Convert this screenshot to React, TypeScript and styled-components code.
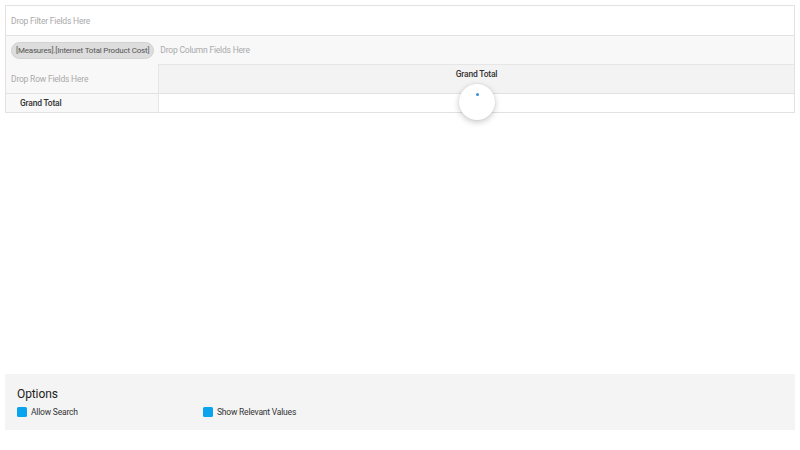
import React from 'react';
import styled, { createGlobalStyle } from 'styled-components';

const GlobalStyle = createGlobalStyle`
  html, body {
    margin: 0;
    padding: 0;
    background: #ffffff;
    font-family: Roboto, "Liberation Sans", Arial, sans-serif;
  }
`;

const Page = styled.div`
  padding: 5px;
  width: 790px;
`;

const PivotGrid = styled.div`
  position: relative;
  border: 1px solid #e2e2e2;
  background: #ffffff;
`;

const FilterArea = styled.div`
  height: 29px;
  display: flex;
  align-items: center;
  padding-left: 5px;
  border-bottom: 1px solid #e2e2e2;
`;

const Placeholder = styled.span`
  font-size: 8.5px;
  letter-spacing: -0.2px;
  color: #aaaaaa;
`;

const ColumnArea = styled.div`
  height: 28px;
  display: flex;
  align-items: center;
  gap: 6px;
  padding-left: 5px;
  background: #f8f8f8;
`;

const Chip = styled.span`
  display: inline-flex;
  align-items: center;
  height: 17px;
  padding: 0 4px;
  border-radius: 9px;
  background: #dddddd;
  border: 1px solid #d2d2d2;
  box-sizing: border-box;
  font-size: 8px;
  letter-spacing: -0.2px;
  color: #555;
  white-space: nowrap;
`;

const Table = styled.div`
  display: grid;
  grid-template-columns: 152px 1fr;
  grid-template-rows: 30px 18px;
`;

const RowFieldsCell = styled.div`
  background: #f8f8f8;
  display: flex;
  align-items: center;
  padding-left: 5px;
  border-bottom: 1px solid #e2e2e2;
`;

const HeaderCell = styled.div`
  background: #f3f3f3;
  border-top: 1px solid #e6e6e6;
  border-left: 1px solid #e6e6e6;
  border-bottom: 1px solid #e2e2e2;
  text-align: center;
  padding-top: 4px;
  font-size: 8.5px;
  letter-spacing: -0.2px;
  font-weight: 500;
  color: #333;
`;

const RowHeader = styled.div`
  background: #f8f8f8;
  display: flex;
  align-items: center;
  padding-left: 14px;
  font-size: 8.5px;
  letter-spacing: -0.2px;
  font-weight: 500;
  color: #333;
`;

const ValueCell = styled.div`
  background: #ffffff;
  border-left: 1px solid #e6e6e6;
`;

const Spinner = styled.div`
  position: absolute;
  left: 453px;
  top: 78px;
  width: 36px;
  height: 36px;
  border-radius: 50%;
  background: #ffffff;
  box-shadow: 0 2px 6px rgba(0, 0, 0, 0.22), 0 0 2px rgba(0, 0, 0, 0.08);
  display: flex;
  justify-content: center;
`;

const SpinnerDot = styled.span`
  margin-top: 9px;
  width: 3px;
  height: 3px;
  border-radius: 50%;
  background: #3a8fd6;
`;

const Options = styled.div`
  margin-top: 261px;
  height: 56px;
  box-sizing: border-box;
  background: #f4f4f4;
  padding: 13px 12px 0 12px;
`;

const OptionsTitle = styled.div`
  font-size: 12px;
  letter-spacing: -0.1px;
  font-weight: 400;
  color: #222;
  line-height: 14px;
`;

const OptionsRow = styled.div`
  display: grid;
  grid-template-columns: 186px 186px;
  margin-top: 6px;
`;

const Option = styled.label`
  display: flex;
  align-items: center;
  gap: 4px;
  font-size: 8.5px;
  letter-spacing: -0.2px;
  color: #333;
`;

const Box = styled.span`
  width: 10px;
  height: 10px;
  border-radius: 1.5px;
  background: #0aa3ee;
`;

export default function App() {
  return (
    <Page>
      <GlobalStyle />
      <PivotGrid>
        <FilterArea>
          <Placeholder>Drop Filter Fields Here</Placeholder>
        </FilterArea>
        <ColumnArea>
          <Chip>[Measures].[Internet Total Product Cost]</Chip>
          <Placeholder>Drop Column Fields Here</Placeholder>
        </ColumnArea>
        <Table>
          <RowFieldsCell>
            <Placeholder>Drop Row Fields Here</Placeholder>
          </RowFieldsCell>
          <HeaderCell>Grand Total</HeaderCell>
          <RowHeader>Grand Total</RowHeader>
          <ValueCell />
        </Table>
        <Spinner>
          <SpinnerDot />
        </Spinner>
      </PivotGrid>
      <Options>
        <OptionsTitle>Options</OptionsTitle>
        <OptionsRow>
          <Option>
            <Box />
            Allow Search
          </Option>
          <Option>
            <Box />
            Show Relevant Values
          </Option>
        </OptionsRow>
      </Options>
    </Page>
  );
}
